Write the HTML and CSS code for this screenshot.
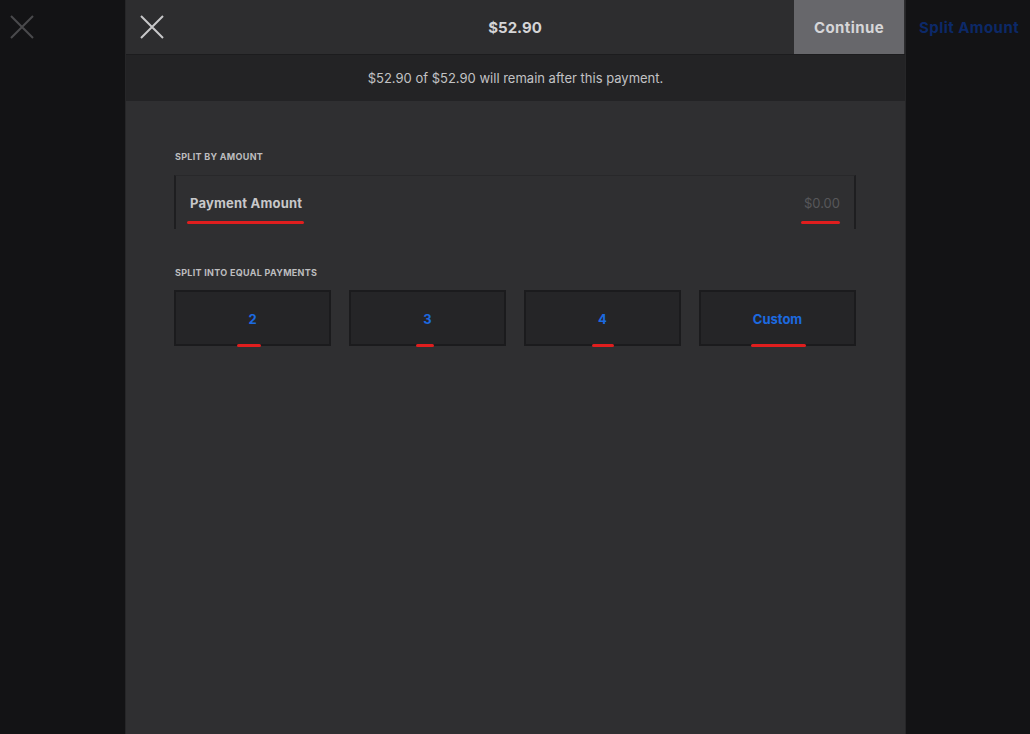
FILE: index.html
```html
<!DOCTYPE html>
<html>
<head>
<meta charset="utf-8">
<link rel="stylesheet" href="styles.css">
</head>
<body>
<div class="page">
  <div class="side side-left">
    <svg class="x-icon x-dim" width="24" height="24" viewBox="0 0 24 24"><path d="M1 1L23 23M23 1L1 23" stroke="currentColor" stroke-width="2" fill="none"/></svg>
  </div>
  <div class="modal">
    <div class="header">
      <div class="header-left">
        <svg class="x-icon x-light" width="24" height="24" viewBox="0 0 24 24"><path d="M1 1L23 23M23 1L1 23" stroke="currentColor" stroke-width="2" fill="none"/></svg>
      </div>
      <div class="header-title">$52.90</div>
      <div class="continue">Continue</div>
    </div>
    <div class="info">$52.90 of $52.90 will remain after this payment.</div>
    <div class="content">
      <div class="section-label">SPLIT BY AMOUNT</div>
      <div class="amount-input">
        <span class="amount-label">Payment Amount</span>
        <span class="amount-value">$0.00</span>
        <span class="mark mark-label"></span>
        <span class="mark mark-value"></span>
      </div>
      <div class="section-label second">SPLIT INTO EQUAL PAYMENTS</div>
      <div class="options">
        <div class="option">2<span class="mark mark-2"></span></div>
        <div class="option">3<span class="mark mark-3"></span></div>
        <div class="option">4<span class="mark mark-4"></span></div>
        <div class="option">Custom<span class="mark mark-custom"></span></div>
      </div>
    </div>
  </div>
  <div class="side side-right">
    <div class="split-link">Split Amount</div>
  </div>
</div>
</body>
</html>
```

FILE: styles.css
```css
* { box-sizing: border-box; }
html, body {
  margin: 0;
  padding: 0;
  height: 100%;
}
body {
  background: #131315;
  font-family: Inter, "Noto Sans", "Liberation Sans", sans-serif;
  overflow: hidden;
}
.page {
  display: flex;
  height: 734px;
}
.side {
  flex: none;
}
.side-left {
  width: 126px;
  padding: 15px 0 0 10px;
}
.side-right {
  flex: 1;
  padding-left: 14px;
}
.x-icon {
  display: block;
}
.x-dim { color: #4a4a4c; }
.x-light { color: #c8c8ca; }
.modal {
  width: 779px;
  flex: none;
  display: flex;
  flex-direction: column;
  background: #2f2f31;
  box-shadow: -1px 0 0 #262628, 1px 0 0 #262628;
}
.header {
  height: 55px;
  display: flex;
  align-items: stretch;
  background: #2d2d2f;
  border-bottom: 1px solid #1c1c1e;
  position: relative;
}
.header-left {
  width: 110px;
  padding: 15px 0 0 14px;
}
.header-title {
  flex: 1;
  display: flex;
  align-items: center;
  justify-content: center;
  color: #d4d4d6;
  font-weight: 700;
  font-size: 15px;
}
.continue {
  width: 110px;
  display: flex;
  align-items: center;
  justify-content: center;
  background: #67676b;
  color: #d6d6d8;
  font-weight: 700;
  font-size: 15px;
  letter-spacing: 0.4px;
  margin-right: 1px;
}
.split-link {
  height: 54px;
  display: flex;
  align-items: center;
  color: #0c2968;
  font-weight: 700;
  font-size: 15px;
  letter-spacing: 0.45px;
}
.info {
  height: 46px;
  background: #232325;
  display: flex;
  align-items: center;
  justify-content: center;
  color: #c2c2c4;
  font-size: 13px;
}
.content {
  flex: 1;
  padding: 50px 49px 0 48px;
}
.section-label {
  font-size: 9px;
  font-weight: 700;
  color: #bdbdbf;
  line-height: 12px;
  height: 12px;
  margin-bottom: 12px;
  margin-left: 1px;
  letter-spacing: 0.3px;
}
.section-label.second {
  margin-top: 38px;
  margin-bottom: 11px;
}
.amount-input {
  position: relative;
  height: 54px;
  border-top: 1px solid #28282a;
  border-left: 2px solid #1e1e20;
  border-right: 2px solid #1e1e20;
  display: flex;
  align-items: center;
  justify-content: space-between;
  padding: 0 14px 0 14px;
}
.amount-label {
  color: #c8c8ca;
  font-weight: 700;
  font-size: 13px;
  letter-spacing: 0.2px;
}
.amount-value {
  color: #57575a;
  font-size: 13px;
}
.mark {
  position: absolute;
  height: 3px;
  border-radius: 2px;
  background: #e01e1e;
}
.mark-label { left: 11px; width: 117px; top: 45px; }
.mark-value { right: 14px; width: 39px; top: 45px; }
.options {
  display: flex;
  gap: 18px;
}
.option {
  position: relative;
  width: 157px;
  height: 56px;
  background: #252527;
  border: 2px solid #1b1b1d;
  display: flex;
  align-items: center;
  justify-content: center;
  color: #1c6ae0;
  font-weight: 700;
  font-size: 13px;
  padding-top: 2px;
}
.option .mark { bottom: -3px; }
.mark-2 { left: 61px; width: 24px; }
.mark-3 { left: 65px; width: 18px; }
.mark-4 { left: 66px; width: 22px; }
.mark-custom { left: 50px; width: 55px; }
```
